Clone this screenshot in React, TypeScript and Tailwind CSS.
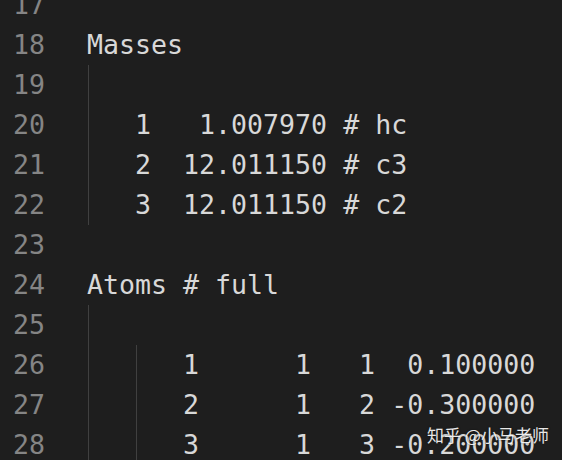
const lines: { n: number; depth: number; text: string }[] = [
  { n: 17, depth: 0, text: "" },
  { n: 18, depth: 0, text: "Masses" },
  { n: 19, depth: 1, text: "" },
  { n: 20, depth: 1, text: "1   1.007970 # hc" },
  { n: 21, depth: 1, text: "2  12.011150 # c3" },
  { n: 22, depth: 1, text: "3  12.011150 # c2" },
  { n: 23, depth: 0, text: "" },
  { n: 24, depth: 0, text: "Atoms # full" },
  { n: 25, depth: 1, text: "" },
  { n: 26, depth: 2, text: "1      1   1  0.100000" },
  { n: 27, depth: 2, text: "2      1   2 -0.300000" },
  { n: 28, depth: 2, text: "3      1   3 -0.200000" },
];

export default function App() {
  return (
    <div className="relative w-[562px] h-[460px] overflow-hidden bg-[#1e1e1e] font-['DejaVu_Sans_Mono',monospace] text-[26.6px]">
      <div className="-mt-[15px] flex flex-col">
        {lines.map((l) => (
          <div key={l.n} className="flex h-10 items-center">
            <span className="w-[45px] shrink-0 text-right text-[#858585]">{l.n}</span>
            <div className="ml-[42px] flex h-full items-center whitespace-pre text-[#d8d8d8]">
              {Array.from({ length: l.depth }).map((_, i) => (
                <span key={i} className="flex h-full w-12 shrink-0">
                  <span className="ml-px h-full border-l border-[#404040]" />
                </span>
              ))}
              <span>{l.text}</span>
            </div>
          </div>
        ))}
      </div>

      {/* watermark */}
      <div className="absolute left-[427px] top-[423px] whitespace-pre font-['Noto_Sans_CJK_SC',sans-serif] text-[17px] leading-6 text-white/90 [text-shadow:0_0_2px_rgba(0,0,0,0.6)]">
        知乎 @小马老师
      </div>
    </div>
  );
}
